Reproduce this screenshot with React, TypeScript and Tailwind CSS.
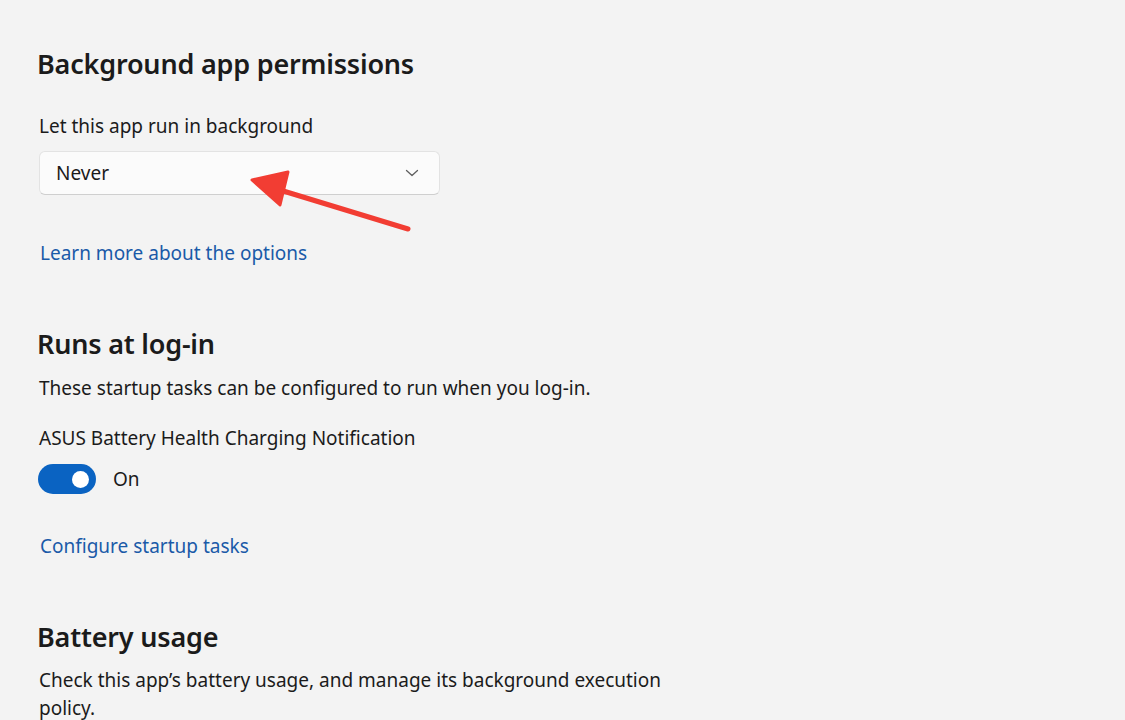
import React from "react";

export default function App() {
  const font = { fontFamily: '"Noto Sans", "Open Sans", Arial, sans-serif' };
  return (
    <div className="w-[1125px] h-[720px] bg-[#f3f3f3] overflow-hidden relative text-[#1b1b1b]" style={font}>
      <div className="pl-[37px] pt-[45px] flex flex-col">
        <h2 className="text-[27px] leading-[38px] font-semibold tracking-[-0.2px]">Background app permissions</h2>
        <div className="mt-[30px] pl-[2px] text-[19px] leading-[26px]">Let this app run in background</div>
        <div className="mt-[12px] ml-[2px] w-[401px] h-[44px] rounded-[6px] bg-[#fbfbfb] border border-[#e3e3e3] border-b-[#cfcfcf] flex items-center justify-between pl-[16px] pr-[20px]">
          <span className="text-[19px]">Never</span>
          <svg width="14" height="8" viewBox="0 0 14 8" fill="none">
            <path d="M1.5 1.5 L7 6.5 L12.5 1.5" stroke="#5f5f5f" strokeWidth="1.3" strokeLinecap="round" strokeLinejoin="round" />
          </svg>
        </div>
        <a className="mt-[45px] pl-[3px] text-[19px] leading-[26px] text-[#1a5aa8]">Learn more about the options</a>

        <h2 className="mt-[59px] text-[27px] leading-[38px] font-semibold tracking-[-0.2px]">Runs at log-in</h2>
        <div className="mt-[12px] pl-[2px] text-[19px] leading-[26px]">These startup tasks can be configured to run when you log-in.</div>
        <div className="mt-[24px] pl-[2px] text-[19px] leading-[26px]">ASUS Battery Health Charging Notification</div>
        <div className="mt-[13px] ml-[1px] flex items-center gap-[17px]">
          <div className="w-[58px] h-[30px] rounded-full bg-[#0a63c2] flex items-center justify-end pr-[7px]">
            <div className="w-[17px] h-[17px] rounded-full bg-white" />
          </div>
          <span className="text-[19px]">On</span>
        </div>
        <a className="mt-[39px] pl-[3px] text-[19px] leading-[26px] text-[#1a5aa8]">Configure startup tasks</a>

        <h2 className="mt-[59px] text-[27px] leading-[38px] font-semibold tracking-[-0.2px]">Battery usage</h2>
        <div className="mt-[10px] pl-[2px] w-[640px] text-[19px] leading-[28px]">Check this app’s battery usage, and manage its background execution policy.</div>
      </div>

      <svg className="absolute left-0 top-0" width="1125" height="720" viewBox="0 0 1125 720">
        <line x1="408" y1="229" x2="280" y2="190" stroke="#f23d33" strokeWidth="5" strokeLinecap="round" />
        <polygon points="252,180 288,172 280,205" fill="#f23d33" stroke="#f23d33" strokeWidth="3" strokeLinejoin="round" />
      </svg>
    </div>
  );
}
